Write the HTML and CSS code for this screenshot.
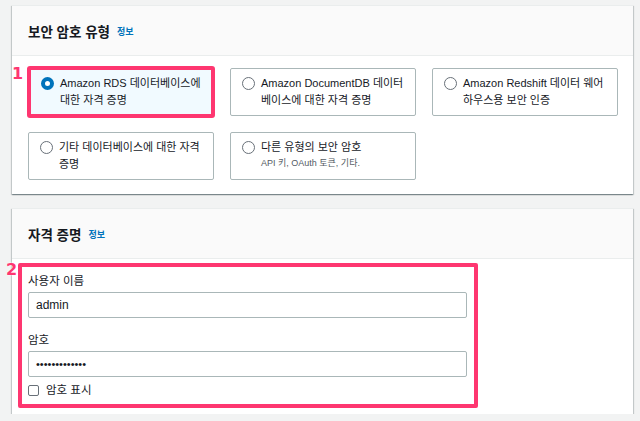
FILE: index.html
```html
<!DOCTYPE html>
<html lang="ko">
<head>
  <meta charset="UTF-8">
  <meta name="viewport" content="width=device-width, initial-scale=1.0">
  <title>보안 암호 저장</title>
  <link rel="stylesheet" href="styles.css">
</head>
<body>
  <div class="page">
    <section class="panel">
      <div class="panel-header">
        <h2>보안 암호 유형</h2>
        <a class="info" href="#">정보</a>
      </div>
      <div class="panel-body">
        <div class="tiles">
          <label class="tile selected">
            <span class="step">1</span>
            <span class="radio"></span>
            <span class="tile-text">Amazon RDS 데이터베이스에 대한 자격 증명</span>
          </label>
          <label class="tile">
            <span class="radio"></span>
            <span class="tile-text">Amazon DocumentDB 데이터베이스에 대한 자격 증명</span>
          </label>
          <label class="tile">
            <span class="radio"></span>
            <span class="tile-text">Amazon Redshift 데이터 웨어하우스용 보안 인증</span>
          </label>
          <label class="tile">
            <span class="radio"></span>
            <span class="tile-text keep">기타 데이터베이스에 대한 자격 증명</span>
          </label>
          <label class="tile">
            <span class="radio"></span>
            <span class="tile-text">다른 유형의 보안 암호
              <small>API 키, OAuth 토큰, 기타.</small>
            </span>
          </label>
        </div>
      </div>
    </section>

    <section class="panel">
      <div class="panel-header">
        <h2>자격 증명</h2>
        <a class="info" href="#">정보</a>
      </div>
      <div class="panel-body creds">
        <div class="highlight">
          <span class="step">2</span>
          <div class="field">
            <label>사용자 이름</label>
            <div class="input">admin</div>
          </div>
          <div class="field">
            <label>암호</label>
            <div class="input dots">•••••••••••••</div>
          </div>
          <label class="check"><span class="box"></span>암호 표시</label>
        </div>
      </div>
    </section>
  </div>
</body>
</html>
```

FILE: styles.css
```css
* {
  box-sizing: border-box;
}

body {
  margin: 0;
  background-color: #f2f3f3;
  font-family: "Liberation Sans", "Noto Sans CJK KR", sans-serif;
  color: #16191f;
  font-size: 11px;
}

.page {
  display: flex;
  flex-direction: column;
  gap: 14px;
  padding: 5px 7px 0 12px;
}

.panel {
  background-color: #fff;
  box-shadow: 0 1px 1px 0 rgba(0, 28, 36, 0.3), 1px 1px 1px 0 rgba(0, 28, 36, 0.15), -1px 1px 1px 0 rgba(0, 28, 36, 0.15);
  border-top: 1px solid #eaeded;
}

.panel-header {
  display: flex;
  align-items: center;
  gap: 7px;
  height: 50px;
  padding: 0 16px;
  background-color: #fafafa;
  border-bottom: 1px solid #eaeded;
}

.panel-header h2 {
  margin: 0;
  font-size: 13.5px;
  font-weight: bold;
}

.info {
  color: #0073bb;
  font-size: 9px;
  font-weight: bold;
  text-decoration: none;
  margin-top: 2px;
}

.panel-body {
  padding: 12px 15px 14px 16px;
}

.tiles {
  display: grid;
  grid-template-columns: repeat(3, 186px);
  column-gap: 16px;
  row-gap: 16px;
}

.tile {
  position: relative;
  display: flex;
  align-items: flex-start;
  gap: 6px;
  min-height: 48px;
  padding: 6px 4px 6px 11px;
  border: 1px solid #aab7b8;
  border-radius: 2px;
  line-height: 17px;
}

.tile.selected {
  margin: -2px -1px;
  padding: 5px 2px 5px 10px;
  border: 4px solid #fe3670;
  border-radius: 3px;
  background-color: #f1faff;
}

.radio {
  flex: none;
  width: 13px;
  height: 13px;
  margin-top: 2px;
  border: 1px solid #687078;
  border-radius: 50%;
  background-color: #fff;
}

.selected .radio {
  border: 4px solid #0073bb;
}

.tile-text.keep {
  word-break: keep-all;
}

.tile-text small {
  display: block;
  font-size: 9px;
  line-height: 14px;
  color: #545b64;
}

.step {
  position: absolute;
  color: #fe3670;
  font-family: "DejaVu Sans", sans-serif;
  font-weight: bold;
  font-size: 16px;
  line-height: 16px;
  text-shadow: 0 0 2px #fff, 0 0 1px #fff;
}

.tile .step {
  left: -19px;
  top: -4px;
}

.creds {
  padding: 4px 0 6px 6px;
}

.highlight {
  position: relative;
  width: 460px;
  padding: 6px 7px 5px 6px;
  border: 4px solid #fe3670;
  border-radius: 2px;
  font-size: 11.5px;
}

.highlight .step {
  left: -16px;
  top: -5px;
}

.field label {
  display: block;
  line-height: 17px;
  margin-bottom: 2px;
}

.field + .field {
  margin-top: 14px;
}

.input {
  height: 26px;
  padding: 0 7px;
  border: 1px solid #aab7b8;
  border-radius: 2px;
  line-height: 24px;
  font-size: 12px;
}

.input.dots {
  font-size: 11px;
}

.check {
  display: flex;
  align-items: center;
  gap: 7px;
  margin-top: 5px;
  line-height: 17px;
}

.box {
  width: 11px;
  height: 11px;
  border: 1px solid #687078;
  border-radius: 2px;
}
```
